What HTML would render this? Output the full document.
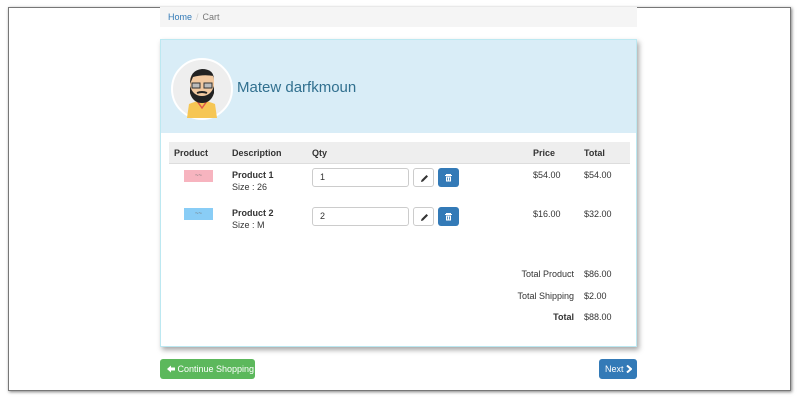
<!DOCTYPE html>
<html><head><style>
body{margin:0;width:800px;height:400px;background:#fff;font-family:"Liberation Sans",sans-serif;font-size:9px;color:#333;position:relative;overflow:hidden}
.frame{position:absolute;left:8px;top:7px;width:783px;height:384px;border:1px solid #777;box-shadow:1px 1px 3px rgba(0,0,0,.5);box-sizing:border-box}
.bc{position:absolute;left:160px;top:7px;width:477px;height:20px;background:#f5f5f5;line-height:20px;padding-left:8px;box-sizing:border-box}
.bc a{color:#337ab7}.bc .s{color:#ccc;margin:0 4px}.bc .c{color:#777}
.card{position:absolute;left:160px;top:39px;width:477px;height:308px;background:#fff;border:1px solid #bce8f1;box-sizing:border-box;box-shadow:2px 3px 5px rgba(0,0,0,.35)}
.hd{position:absolute;left:0;top:0;width:100%;height:93px;background:#d9edf7}
.name{position:absolute;left:76px;top:39px;font-size:15px;color:#31708f}
.av{position:absolute;left:10px;top:18px;width:58px;height:58px;border-radius:50%;background:#eee;border:2px solid #fff}
.th{position:absolute;left:8px;top:102px;width:461px;height:21px;background:#eee;border-bottom:1px solid #ddd;font-weight:bold}
.t{position:absolute}
.sw{position:absolute;width:29px;height:12px;left:23px;font-size:6px;text-align:center;line-height:12px;color:#777}
.in{position:absolute;left:151px;width:97px;height:19px;border:1px solid #ccc;border-radius:3px;box-sizing:border-box;padding-left:7px;line-height:17px;background:#fff}
.be{position:absolute;left:252px;width:21px;height:19px;border:1px solid #ccc;border-radius:3px;box-sizing:border-box;background:#fff}
.bd{position:absolute;left:277px;width:21px;height:19px;border-radius:3px;background:#337ab7}
.be svg,.bd svg{position:absolute;left:6px;top:5px}
.r{position:absolute;text-align:right;width:100px}
.btn{position:absolute;top:359px;height:20px;border-radius:3px;color:#fff;line-height:20px;font-size:9px;box-sizing:border-box;padding:0 7px;white-space:nowrap}
</style></head><body>
<div class="frame"></div>
<div class="bc"><a>Home</a><span class="s">/</span><span class="c">Cart</span></div>
<div class="card">
<div class="hd">
<div class="av"><svg width="58" height="58" viewBox="0 0 58 58">
<path d="M14 58 L16 44 Q29 38 42 44 L44 58Z" fill="#f6c654"/>
<path d="M24 41 L29 48 L34 41" fill="none" stroke="#e05a4a" stroke-width="1.5"/>
<rect x="17" y="12" width="24" height="28" rx="8" fill="#f2c9a0"/>
<path d="M17 24 Q17 10 29 9 Q41 9 41 20 L41 16 Q30 14 20 17 L17 24Z" fill="#222"/>
<path d="M17 26 L17 33 Q20 43 29 43 Q38 43 41 33 L41 26 Q38 36 29 36 Q20 36 17 26Z" fill="#222"/>
<rect x="19" y="23" width="8" height="5" fill="#bbb" stroke="#333"/><rect x="31" y="23" width="8" height="5" fill="#bbb" stroke="#333"/>
<path d="M24 33 Q29 31 34 33" stroke="#222" stroke-width="2" fill="none"/>
</svg></div>
<div class="name">Matew darfkmoun</div>
</div>
<div class="th"><span class="t" style="left:5px;top:6px">Product</span><span class="t" style="left:63px;top:6px">Description</span><span class="t" style="left:143px;top:6px">Qty</span><span class="t" style="left:364px;top:6px">Price</span><span class="t" style="left:415px;top:6px">Total</span></div>
<div class="sw" style="top:130px;background:#f7b4bf">~~</div>
<div class="t" style="left:71px;top:130px;font-weight:bold">Product 1</div>
<div class="t" style="left:71px;top:142px">Size : 26</div>
<div class="in" style="top:128px">1</div>
<div class="be" style="top:128px"><svg width="9" height="9" viewBox="0 0 9 9"><path d="M1 8 L1.5 6 L6.5 1 L8 2.5 L3 7.5Z" fill="#333"/></svg></div>
<div class="bd" style="top:128px"><svg width="9" height="9" viewBox="0 0 9 9"><path d="M2 1h5v1h1v1H1V2h1z M2 3.5h5V8.5H2z" fill="#fff"/><path d="M3.5 4.5v3M5.5 4.5v3" stroke="#337ab7" stroke-width=".8"/></svg></div>
<div class="t" style="left:372px;top:130px">$54.00</div><div class="t" style="left:423px;top:130px">$54.00</div>
<div class="sw" style="top:168px;background:#89cdf6">~~</div>
<div class="t" style="left:71px;top:168px;font-weight:bold">Product 2</div>
<div class="t" style="left:71px;top:180px">Size : M</div>
<div class="in" style="top:167px">2</div>
<div class="be" style="top:167px"><svg width="9" height="9" viewBox="0 0 9 9"><path d="M1 8 L1.5 6 L6.5 1 L8 2.5 L3 7.5Z" fill="#333"/></svg></div>
<div class="bd" style="top:167px"><svg width="9" height="9" viewBox="0 0 9 9"><path d="M2 1h5v1h1v1H1V2h1z M2 3.5h5V8.5H2z" fill="#fff"/><path d="M3.5 4.5v3M5.5 4.5v3" stroke="#337ab7" stroke-width=".8"/></svg></div>
<div class="t" style="left:372px;top:169px">$16.00</div><div class="t" style="left:423px;top:169px">$32.00</div>
<div class="r" style="left:313px;top:229px">Total Product</div><div class="t" style="left:423px;top:229px">$86.00</div>
<div class="r" style="left:313px;top:251px">Total Shipping</div><div class="t" style="left:423px;top:251px">$2.00</div>
<div class="r" style="left:313px;top:272px;font-weight:bold">Total</div><div class="t" style="left:423px;top:272px">$88.00</div>
</div>
<div class="btn" style="left:160px;width:95px;background:#5cb85c"><svg width="8" height="8" viewBox="0 0 8 8" style="vertical-align:-1px"><path d="M0 4L4 0.5V2.5H8V5.5H4V7.5Z" fill="#fff"/></svg> Continue Shopping</div>
<div class="btn" style="left:599px;width:38px;background:#337ab7;padding:0 6px">Next <svg width="6" height="8" viewBox="0 0 6 8" style="vertical-align:-1px"><path d="M1 0.5L5 4L1 7.5" stroke="#fff" stroke-width="2" fill="none"/></svg></div>
</body></html>
